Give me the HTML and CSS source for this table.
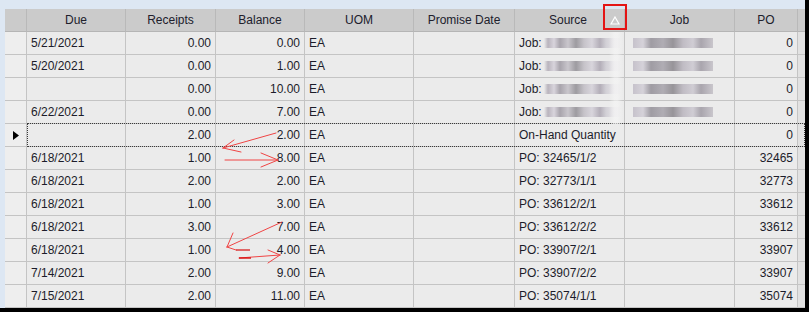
FILE: index.html
```html
<!DOCTYPE html>
<html>
<head>
<meta charset="utf-8">
<link rel="stylesheet" href="styles.css">
</head>
<body>
<div class="screen">
  <div class="grid">
    <div class="row head">
      <div class="c"></div>
      <div class="c">Due</div>
      <div class="c">Receipts</div>
      <div class="c">Balance</div>
      <div class="c">UOM</div>
      <div class="c">Promise Date</div>
      <div class="c src">Source <span class="sort"><svg width="10" height="9" viewBox="0 0 10 9"><path d="M5 1 L9 8 L1 8 Z" fill="none" stroke="#fff" stroke-width="1.2"/></svg></span></div>
      <div class="c">Job</div>
      <div class="c">PO</div>
      <div class="c pad"></div>
    </div>

    <div class="row">
      <div class="c rh"></div><div class="c">5/21/2021</div><div class="c n">0.00</div><div class="c n">0.00</div><div class="c">EA</div><div class="c"></div>
      <div class="c">Job: <span class="blur b1"></span></div><div class="c"><span class="blur b2"></span></div><div class="c n">0</div><div class="c pad"></div>
    </div>
    <div class="row">
      <div class="c rh"></div><div class="c">5/20/2021</div><div class="c n">0.00</div><div class="c n">1.00</div><div class="c">EA</div><div class="c"></div>
      <div class="c">Job: <span class="blur b1"></span></div><div class="c"><span class="blur b2"></span></div><div class="c n">0</div><div class="c pad"></div>
    </div>
    <div class="row">
      <div class="c rh"></div><div class="c"></div><div class="c n">0.00</div><div class="c n">10.00</div><div class="c">EA</div><div class="c"></div>
      <div class="c">Job: <span class="blur b1"></span></div><div class="c"><span class="blur b2"></span></div><div class="c n">0</div><div class="c pad"></div>
    </div>
    <div class="row">
      <div class="c rh"></div><div class="c">6/22/2021</div><div class="c n">0.00</div><div class="c n">7.00</div><div class="c">EA</div><div class="c"></div>
      <div class="c">Job: <span class="blur b1"></span></div><div class="c"><span class="blur b2"></span></div><div class="c n">0</div><div class="c pad"></div>
    </div>
    <div class="row current">
      <div class="c rh"><svg class="ind" width="6" height="9" viewBox="0 0 6 9"><path d="M0 0 L6 4.5 L0 9 Z" fill="#000"/></svg></div><div class="c"></div><div class="c n">2.00</div><div class="c n">2.00</div><div class="c">EA</div><div class="c"></div>
      <div class="c">On-Hand Quantity</div><div class="c"></div><div class="c n">0</div><div class="c pad"></div>
    </div>
    <div class="row">
      <div class="c rh"></div><div class="c">6/18/2021</div><div class="c n">1.00</div><div class="c n">8.00</div><div class="c">EA</div><div class="c"></div>
      <div class="c">PO: 32465/1/2</div><div class="c"></div><div class="c n">32465</div><div class="c pad"></div>
    </div>
    <div class="row">
      <div class="c rh"></div><div class="c">6/18/2021</div><div class="c n">2.00</div><div class="c n">2.00</div><div class="c">EA</div><div class="c"></div>
      <div class="c">PO: 32773/1/1</div><div class="c"></div><div class="c n">32773</div><div class="c pad"></div>
    </div>
    <div class="row">
      <div class="c rh"></div><div class="c">6/18/2021</div><div class="c n">1.00</div><div class="c n">3.00</div><div class="c">EA</div><div class="c"></div>
      <div class="c">PO: 33612/2/1</div><div class="c"></div><div class="c n">33612</div><div class="c pad"></div>
    </div>
    <div class="row">
      <div class="c rh"></div><div class="c">6/18/2021</div><div class="c n">3.00</div><div class="c n">7.00</div><div class="c">EA</div><div class="c"></div>
      <div class="c">PO: 33612/2/2</div><div class="c"></div><div class="c n">33612</div><div class="c pad"></div>
    </div>
    <div class="row">
      <div class="c rh"></div><div class="c">6/18/2021</div><div class="c n">1.00</div><div class="c n">4.00</div><div class="c">EA</div><div class="c"></div>
      <div class="c">PO: 33907/2/1</div><div class="c"></div><div class="c n">33907</div><div class="c pad"></div>
    </div>
    <div class="row">
      <div class="c rh"></div><div class="c">7/14/2021</div><div class="c n">2.00</div><div class="c n">9.00</div><div class="c">EA</div><div class="c"></div>
      <div class="c">PO: 33907/2/2</div><div class="c"></div><div class="c n">33907</div><div class="c pad"></div>
    </div>
    <div class="row">
      <div class="c rh"></div><div class="c">7/15/2021</div><div class="c n">2.00</div><div class="c n">11.00</div><div class="c">EA</div><div class="c"></div>
      <div class="c">PO: 35074/1/1</div><div class="c"></div><div class="c n">35074</div><div class="c pad"></div>
    </div>

    <div class="smear"></div>
    <div class="mark"></div>
    <svg class="arrows" width="805" height="308" viewBox="0 0 805 308">
      <g fill="none" stroke="#f04545" stroke-width="1" stroke-linecap="round">
        <path d="M271 124 L218 139 M218 139 L229 131 M218 139 L236 143"/>
        <path d="M220 151 L273 151 M273 151 L256 144 M273 151 L256 158"/>
        <path d="M277 213 L222 238 M222 238 L228 224 M222 238 L231 241"/>
        <path d="M234 249 L275 246 M275 246 L263 241 M275 246 L263 254"/>
      </g>
      <path d="M231 241 L245 241" stroke="#d81010" stroke-width="1.2"/>
      <path d="M234 249 L246 249" stroke="#d81010" stroke-width="1.4"/>
    </svg>
  </div>
</div>
</body>
</html>
```

FILE: styles.css
```css
html, body {
  margin: 0;
  padding: 0;
  background: #000;
}
body {
  width: 809px;
  height: 312px;
  overflow: hidden;
}
.screen {
  width: 805px;
  height: 308px;
  box-sizing: border-box;
  background: #dde7f3;
  padding: 9px 0 0 5px;
  overflow: hidden;
}
.grid {
  position: relative;
  width: 800px;
  font-family: "Liberation Sans", Arial, sans-serif;
  font-size: 12px;
  color: #1c1c2a;
}
.row {
  position: relative;
  display: grid;
  grid-template-columns: 22px 99px 90px 89px 109px 101px 110px 110px 63px 7px;
  height: 23px;
  background: #ebebeb;
}
.c {
  box-sizing: border-box;
  height: 23px;
  border-right: 1px solid #c4c4c4;
  border-bottom: 1px solid #c4c4c4;
  padding: 0 4px;
  line-height: 22px;
  white-space: nowrap;
  overflow: hidden;
  display: flex;
  align-items: center;
}
.c.n {
  justify-content: flex-end;
}
.c.rh {
  background: #eeeeee;
  padding: 0 0 0 8px;
}
.c.pad {
  border-right: none;
  background: #e2e2e2;
}
.head {
  background: #cbcbcb;
}
.head .c {
  justify-content: center;
  border-right: 1px solid #b9b9b9;
  border-bottom: 1px solid #b5b5b5;
  color: #20202c;
}
.head .c.pad {
  background: #cbcbcb;
}
.head .src {
  justify-content: flex-start;
  padding-left: 34px;
  position: relative;
}
.sort {
  position: absolute;
  left: 95px;
  top: 7px;
  line-height: 0;
}
.ind {
  display: block;
}
.current::after {
  content: "";
  position: absolute;
  left: 22px;
  right: 0;
  top: -1px;
  bottom: 0;
  border: 1px dotted #3a3a3a;
  pointer-events: none;
}
.blur {
  display: inline-block;
  height: 10px;
  margin-left: 2px;
}
.b1 {
  width: 78px;
  background: linear-gradient(90deg, #ebebeb 0, #b9b4bd 4px, #d8d4dc 10px, #a8a4ac 16px, #c9c6cc 24px, #9d9ba0 32px, #c6c3c9 40px, #d8d5dc 48px, #b3aeb8 56px, #d2d0d6 62px, #e4e2e6 70px, #ebebeb 78px);
}
.b2 {
  width: 80px;
  margin-left: 4px;
  background: linear-gradient(90deg, #c6c2cb 0, #d5d2d9 10px, #9f9ca3 18px, #b0adb4 30px, #979499 40px, #c0bcc4 50px, #d0cdd4 60px, #a9a5ad 68px, #c9c6cc 80px);
}
.smear {
  position: absolute;
  left: 604px;
  top: 23px;
  width: 14px;
  height: 92px;
  background: linear-gradient(90deg, rgba(245,245,245,0), rgba(246,246,246,0.6) 40%, rgba(246,246,246,0.6) 60%, rgba(245,245,245,0));
  pointer-events: none;
}
.mark {
  position: absolute;
  left: 598px;
  top: -5px;
  width: 20px;
  height: 22px;
  border: 2px solid #e41414;
  pointer-events: none;
}
.arrows {
  position: absolute;
  left: 0;
  top: 0;
  pointer-events: none;
}
```
